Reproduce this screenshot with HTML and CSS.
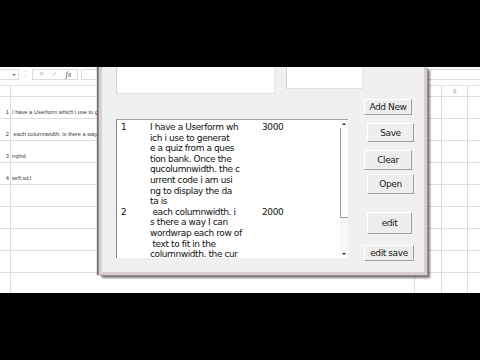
FILE: index.html
```html
<!DOCTYPE html>
<html>
<head>
<meta charset="utf-8">
<link rel="stylesheet" href="styles.css">
</head>
<body>
<div class="screen">
  <div class="bar"></div>
  <div class="sheet">
    <div class="fbar">
      <div class="namebox"><span class="dd"></span></div>
      <span class="sep">⋮</span>
      <div class="fxbox"><span class="ic x">✕</span><span class="ic ck">✓</span><span class="ic fx">fx</span></div>
      <div class="finput"></div>
    </div>
    <div class="grid">
      <div class="row head"><div class="c a"></div><div class="c b"></div><div class="c r"></div><div class="c s">S</div><div class="c t"></div></div>
      <div class="row"><div class="c a">1</div><div class="c b">I have a Userform which i use to generate a quiz</div><div class="c r"></div><div class="c s"></div><div class="c t"></div></div>
      <div class="row"><div class="c a">2</div><div class="c b"> each columnwidth. is there a way I can</div><div class="c r"></div><div class="c s"></div><div class="c t"></div></div>
      <div class="row"><div class="c a">3</div><div class="c b">mjihd</div><div class="c r"></div><div class="c s"></div><div class="c t"></div></div>
      <div class="row"><div class="c a">4</div><div class="c b">wrfl;sd;l</div><div class="c r"></div><div class="c s"></div><div class="c t"></div></div>
      <div class="row"><div class="c a"></div><div class="c b"></div><div class="c r"></div><div class="c s"></div><div class="c t"></div></div>
      <div class="row"><div class="c a"></div><div class="c b"></div><div class="c r"></div><div class="c s"></div><div class="c t"></div></div>
      <div class="row"><div class="c a"></div><div class="c b"></div><div class="c r"></div><div class="c s"></div><div class="c t"></div></div>
      <div class="row"><div class="c a"></div><div class="c b"></div><div class="c r"></div><div class="c s"></div><div class="c t"></div></div>
      <div class="row"><div class="c a"></div><div class="c b"></div><div class="c r"></div><div class="c s"></div><div class="c t"></div></div>
    </div>

    <div class="window">
      <div class="client">
        <div class="toprow">
          <div class="tbox big"></div>
          <div class="tbox small"></div>
        </div>
        <div class="mainrow">
          <div class="listbox">
            <div class="items">
              <div class="item">
                <div class="col1">1</div>
                <div class="col2">
                  <div class="ln">I have a Userform wh</div>
                  <div class="ln">ich i use to generat</div>
                  <div class="ln">e a quiz from a ques</div>
                  <div class="ln">tion bank. Once the</div>
                  <div class="ln">qucolumnwidth. the c</div>
                  <div class="ln">urrent code i am usi</div>
                  <div class="ln">ng to display the da</div>
                  <div class="ln">ta is</div>
                </div>
                <div class="col3">3000</div>
              </div>
              <div class="item">
                <div class="col1">2</div>
                <div class="col2">
                  <div class="ln"> each columnwidth. i</div>
                  <div class="ln">s there a way I can</div>
                  <div class="ln">wordwrap each row of</div>
                  <div class="ln"> text to fit in the</div>
                  <div class="ln">columnwidth. the cur</div>
                </div>
                <div class="col3">2000</div>
              </div>
            </div>
            <div class="vscroll">
              <div class="sbtn"><span class="up"></span></div>
              <div class="thumb"></div>
              <div class="track"></div>
              <div class="sbtn"><span class="down"></span></div>
            </div>
          </div>
          <div class="buttons">
            <div class="btn addnew">Add New</div>
            <div class="btn save">Save</div>
            <div class="btn clear">Clear</div>
            <div class="btn open">Open</div>
            <div class="btn edit">edit</div>
            <div class="btn editsave">edit save</div>
          </div>
        </div>
      </div>
    </div>
  </div>
  <div class="bar"></div>
</div>
</body>
</html>
```
FILE: styles.css
```css
* { box-sizing: border-box; }
html, body { margin: 0; padding: 0; background: #000; }
.screen { width: 480px; height: 360px; display: flex; flex-direction: column; background: #000; overflow: hidden; }
.bar { height: 67px; background: #000; flex: none; }
.sheet { height: 226px; background: #fff; position: relative; overflow: hidden; flex: none; }

.fbar { height: 19px; display: flex; align-items: flex-start; padding-top: 2px; border-bottom: 1px solid #e2e2e2; background: #fff; }
.namebox { width: 19px; height: 11px; border: 1px solid #dedede; border-left: none; position: relative; }
.dd { position: absolute; left: 12px; top: 4px; width: 0; height: 0; border-left: 2px solid transparent; border-right: 2px solid transparent; border-top: 2px solid #777; }
.sep { width: 13px; text-align: center; font: 7px "DejaVu Sans", sans-serif; color: #999; line-height: 11px; }
.fxbox { width: 46px; height: 11px; border: 1px solid #dcdcdc; display: flex; align-items: center; justify-content: space-around; padding: 0 2px; }
.ic { font-family: "DejaVu Sans", sans-serif; font-size: 7px; line-height: 9px; color: #bdbdbd; }
.ic.fx { font-family: "Liberation Serif", serif; font-style: italic; font-size: 8px; color: #555; }
.finput { margin-left: 3px; flex: 1; height: 11px; border: 1px solid #dcdcdc; border-right: none; }

.grid { display: flex; flex-direction: column; }
.row { display: grid; grid-template-columns: 11px 404px 27px 26px 12px; height: 22px; border-bottom: 1px solid #dddddd; }
.row.head { height: 11px; }
.c { border-right: 1px solid #dddddd; font: 5.7px "Liberation Sans", Arial, sans-serif; color: #3a3a3a; display: flex; align-items: flex-end; padding-bottom: 3px; white-space: pre; overflow: visible; }
.c.a { justify-content: flex-end; padding-right: 1px; }
.c.b { padding-left: 1px; }
.row.head .c { align-items: center; justify-content: center; padding: 0; color: #888; font-size: 5.5px; }
.c.t { border-right: none; }

.window { position: absolute; left: 99px; top: 0; width: 328px; height: 208px; border: 3px solid #d8d0d0; border-top: none; box-shadow: -1px 0 0 #9a9292, -2px 0 1px #6f6a6a, 1px 1px 0 #9a9090, 3px 3px 2px rgba(70,60,60,0.7); }
.client { width: 322px; height: 205px; background: #f0f0f0; display: flex; flex-direction: column; font-family: "DejaVu Sans", sans-serif; font-size: 9px; letter-spacing: -0.4px; color: #111; }

.toprow { display: flex; align-items: flex-start; padding-left: 14px; gap: 11px; height: 27px; }
.tbox { background: #fff; border-left: 1px solid #d0d0d0; border-bottom: 1px solid #e0e0e0; border-right: 1px solid #e6e6e6; }
.tbox.big { width: 159px; height: 27px; }
.tbox.small { width: 77px; height: 22px; }

.mainrow { display: flex; margin-top: 5px; }
.listbox { margin-left: 14px; margin-top: 20px; width: 232px; height: 139px; background: #fff; border-top: 1px solid #a8a8a8; border-left: 1px solid #8a8a8a; display: flex; }
.items { flex: 1; overflow: hidden; padding-top: 2px; }
.item { display: grid; grid-template-columns: 29px 112px 1fr; padding-left: 4px; line-height: 10.6px; }
.ln { white-space: pre; }

.vscroll { width: 8px; display: flex; flex-direction: column; background: #f5f5f5; }
.sbtn { height: 8px; display: flex; align-items: center; justify-content: center; background: #fff; }
.up { width: 0; height: 0; border-left: 2px solid transparent; border-right: 2px solid transparent; border-bottom: 2px solid #222; }
.down { width: 0; height: 0; border-left: 2px solid transparent; border-right: 2px solid transparent; border-top: 2px solid #222; }
.thumb { height: 90px; background: #fff; border-left: 1px solid #9a9a9a; border-bottom: 1px solid #9a9a9a; }
.track { flex: 1; background: #f7f7f7; }

.buttons { margin-left: 16px; display: flex; flex-direction: column; align-items: flex-start; }
.btn { display: flex; align-items: center; justify-content: center; background: #eeeeee; border: 1px solid; border-color: #ffffff #a0a0a0 #a0a0a0 #ffffff; color: #1a1a1a; white-space: nowrap; }
.addnew { width: 48px; height: 16px; }
.save { margin-left: 3px; margin-top: 8px; width: 47px; height: 19px; }
.clear { margin-top: 8px; width: 48px; height: 20px; }
.open { margin-left: 3px; margin-top: 4px; width: 47px; height: 20px; }
.edit { margin-left: 3px; margin-top: 18px; width: 45px; height: 22px; }
.editsave { margin-top: 11px; width: 50px; height: 16px; }
```
